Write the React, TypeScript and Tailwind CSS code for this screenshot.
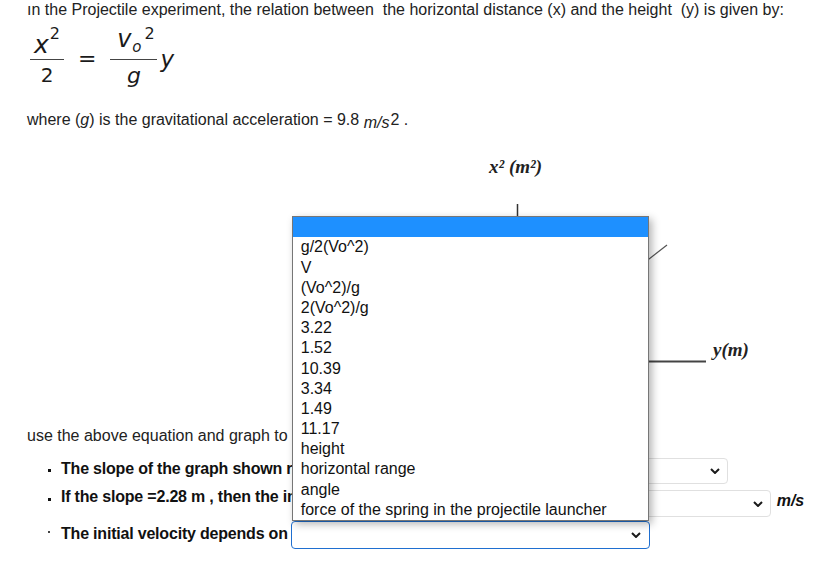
import React from 'react';

const options = [
  'g/2(Vo^2)',
  'V',
  '(Vo^2)/g',
  '2(Vo^2)/g',
  '3.22',
  '1.52',
  '10.39',
  '3.34',
  '1.49',
  '11.17',
  'height',
  'horizontal range',
  'angle',
  'force of the spring in the projectile launcher',
];

function Chevron() {
  return (
    <svg width="10" height="6" viewBox="0 0 10 6">
      <path d="M1 1l4 4 4-4" fill="none" stroke="#1a1a1a" strokeWidth="2" />
    </svg>
  );
}

export default function App() {
  return (
    <div className="h-[585px] w-[815px] overflow-hidden bg-white pl-[27px] font-['Liberation_Sans',Arial,sans-serif] text-[16px] text-[#222]">
      {/* intro */}
      <p className="whitespace-pre pt-[1px] leading-[18px]">
        ın the Projectile experiment, the relation between  the horizontal distance (x) and the height  (y) is given by:
      </p>

      {/* equation */}
      <div className="mt-[14px] flex h-[52px] items-center font-['DejaVu_Sans',sans-serif] text-[#1a1a1a]">
        <div className="ml-[3px] flex w-[34px] flex-col items-center">
          <div className="flex h-[24px]">
            <span className="-mt-[1px] text-[25px] italic leading-none">x</span>
            <span className="ml-[1px] -mt-[7px] text-[16px] leading-none">2</span>
          </div>
          <div className="mt-[2px] h-px w-full bg-[#444]" />
          <div className="mt-[5px] h-[20px] text-[20px] leading-none">2</div>
        </div>
        <span className="ml-[14px] text-[22px] leading-none">=</span>
        <div className="ml-[14px] flex w-[47px] flex-col items-center">
          <div className="flex h-[24px] pl-[4px]">
            <span className="-mt-[6px] text-[24px] italic leading-none">v</span>
            <span className="ml-[1px] mt-[7px] text-[15px] italic leading-none">o</span>
            <span className="ml-[3px] -mt-[7px] text-[16px] leading-none">2</span>
          </div>
          <div className="mt-[2px] h-px w-full bg-[#444]" />
          <div className="mt-[5px] h-[20px] text-[22px] italic leading-none">g</div>
        </div>
        <span className="ml-[3px] text-[23px] italic leading-none">y</span>
      </div>

      <p className="mt-[26px] leading-[18px]">
        where (<i>g</i>) is the gravitational acceleration = 9.8 <i className="align-[-3px]">m/s</i>
        <span className="ml-[1px]">2</span> .
      </p>

      {/* graph */}
      <div className="-ml-[27px] h-[295px] w-[815px]">
        <svg width="815" height="295" viewBox="0 129 815 295">
          <text
            x="489"
            y="170"
            fontFamily="Liberation Serif, serif"
            fontWeight="bold"
            fontStyle="italic"
            fontSize="19"
            fill="#222"
          >
            x² (m²)
          </text>
          <line x1="517.5" y1="201" x2="517.5" y2="359" stroke="#333" strokeWidth="1.5" />
          <line x1="517" y1="359" x2="667" y2="242" stroke="#555" strokeWidth="1.2" />
          <line x1="400" y1="358.5" x2="706" y2="358.5" stroke="#444" strokeWidth="1.8" />
          <text
            x="713"
            y="353"
            fontFamily="Liberation Serif, serif"
            fontWeight="bold"
            fontStyle="italic"
            fontSize="19"
            fill="#222"
          >
            y(m)
          </text>
        </svg>
      </div>

      <p className="leading-[18px]">use the above equation and graph to answer the following:</p>

      {/* questions */}
      <div className="ml-[21px] font-bold tracking-[-0.2px] text-[#111]">
        <div className="mt-[13px] flex h-[26px] items-start">
          <span className="mt-[11px] h-[3px] w-[3px] bg-[#111]" />
          <span className="ml-[10px] mt-[2px] leading-[18px]">The slope of the graph shown represents</span>
          <div className="ml-[3px] flex h-[26px] w-[359px] items-center justify-end rounded-[4px] border border-[#e0e0e0] bg-white pr-[7px]">
            <Chevron />
          </div>
        </div>

        <div className="mt-[4px] flex h-[29px] items-start">
          <span className="mt-[10px] h-[3px] w-[3px] bg-[#111]" />
          <span className="ml-[10px] leading-[18px]">If the slope =2.28 m , then the initial velocity =</span>
          <div className="ml-[13px] mt-[2px] flex h-[27px] w-[359px] items-center justify-end rounded-[4px] border border-[#e0e0e0] bg-white pr-[7px]">
            <Chevron />
          </div>
          <span className="ml-[6px] mt-[4px] italic leading-[18px] tracking-normal">m/s</span>
        </div>

        <div className="mt-[4px] flex h-[28px] items-start">
          <span className="mt-[10px] h-[2px] w-[2px] bg-[#444]" />
          <span className="ml-[11px] mt-[4px] leading-[18px]">The initial velocity depends on</span>
          <div className="relative ml-[3px]">
            <div className="flex h-[28px] w-[359px] items-center justify-end rounded-[4px] border border-[#1f6fd0] bg-white pr-[8px]">
              <Chevron />
            </div>
            {/* open option list */}
            <div className="absolute bottom-full left-[1px] w-[357px] border border-[#767676] bg-white font-normal tracking-normal text-[#111] shadow-[3px_3px_8px_rgba(0,0,0,0.3)]">
              <div className="h-[20.2px] bg-[#1e90ff]" />
              {options.map((o) => (
                <div key={o} className="h-[20.2px] whitespace-nowrap pl-[8px] leading-[20.2px]">
                  {o}
                </div>
              ))}
            </div>
          </div>
        </div>
      </div>
    </div>
  );
}
